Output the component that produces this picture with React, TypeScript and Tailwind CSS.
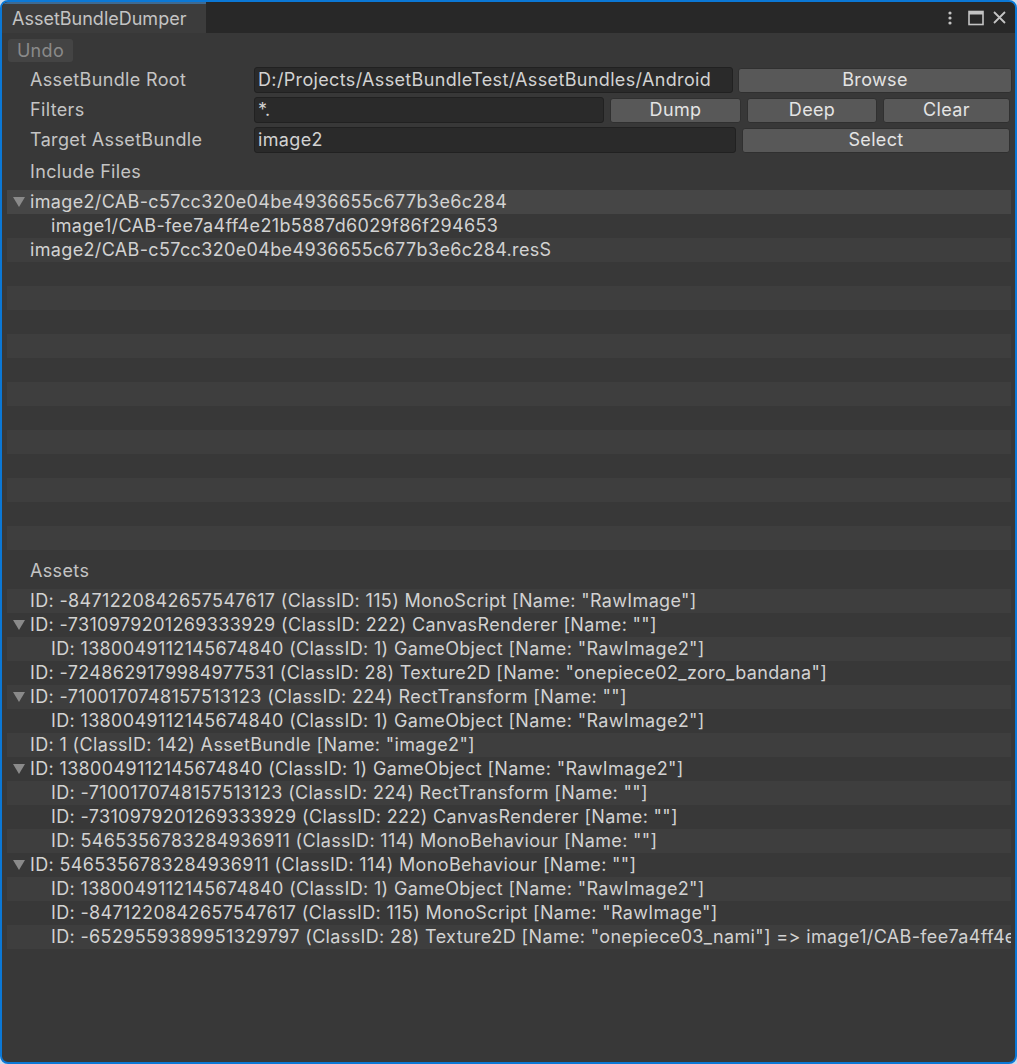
import React from 'react'

type Row = { text: string; depth: number; arrow?: boolean }

const files: Row[] = [
  { text: 'image2/CAB-c57cc320e04be4936655c677b3e6c284', depth: 0, arrow: true },
  { text: 'image1/CAB-fee7a4ff4e21b5887d6029f86f294653', depth: 1 },
  { text: 'image2/CAB-c57cc320e04be4936655c677b3e6c284.resS', depth: 0 }
]

const assets: Row[] = [
  { text: 'ID: -8471220842657547617 (ClassID: 115) MonoScript [Name: "RawImage"]', depth: 0 },
  { text: 'ID: -7310979201269333929 (ClassID: 222) CanvasRenderer [Name: ""]', depth: 0, arrow: true },
  { text: 'ID: 1380049112145674840 (ClassID: 1) GameObject [Name: "RawImage2"]', depth: 1 },
  { text: 'ID: -7248629179984977531 (ClassID: 28) Texture2D [Name: "onepiece02_zoro_bandana"]', depth: 0 },
  { text: 'ID: -7100170748157513123 (ClassID: 224) RectTransform [Name: ""]', depth: 0, arrow: true },
  { text: 'ID: 1380049112145674840 (ClassID: 1) GameObject [Name: "RawImage2"]', depth: 1 },
  { text: 'ID: 1 (ClassID: 142) AssetBundle [Name: "image2"]', depth: 0 },
  { text: 'ID: 1380049112145674840 (ClassID: 1) GameObject [Name: "RawImage2"]', depth: 0, arrow: true },
  { text: 'ID: -7100170748157513123 (ClassID: 224) RectTransform [Name: ""]', depth: 1 },
  { text: 'ID: -7310979201269333929 (ClassID: 222) CanvasRenderer [Name: ""]', depth: 1 },
  { text: 'ID: 5465356783284936911 (ClassID: 114) MonoBehaviour [Name: ""]', depth: 1 },
  { text: 'ID: 5465356783284936911 (ClassID: 114) MonoBehaviour [Name: ""]', depth: 0, arrow: true },
  { text: 'ID: 1380049112145674840 (ClassID: 1) GameObject [Name: "RawImage2"]', depth: 1 },
  { text: 'ID: -8471220842657547617 (ClassID: 115) MonoScript [Name: "RawImage"]', depth: 1 },
  {
    text: 'ID: -6529559389951329797 (ClassID: 28) Texture2D [Name: "onepiece03_nami"] => image1/CAB-fee7a4ff4e21b5887d6029f86f294653',
    depth: 1
  }
]

function TreeRow({ row, index, highlight }: { row?: Row; index: number; highlight?: boolean }): React.JSX.Element {
  const bg = highlight ? 'bg-[#464646]' : index % 2 === 0 ? 'bg-[#3e3e3e]' : 'bg-[#383838]'
  return (
    <div className={`flex h-6 items-center overflow-hidden whitespace-nowrap ${bg}`}>
      {row && (
        <>
          <div className="flex w-[23px] shrink-0 justify-center">
            {row.arrow && (
              <svg width="12" height="10" viewBox="0 0 12 10">
                <path d="M0 0 H12 L6 10 Z" fill="#8a8a8a" />
              </svg>
            )}
          </div>
          <span className={row.depth === 1 ? 'pl-[21px]' : ''}>{row.text}</span>
        </>
      )}
    </div>
  )
}

function Button({ label, className }: { label: string; className: string }): React.JSX.Element {
  return (
    <button
      className={`flex h-[25px] items-center justify-center rounded-[3px] border border-[#303030] bg-[#585858] text-[#e4e4e4] ${className}`}
    >
      {label}
    </button>
  )
}

function Field({ value, className }: { value: string; className: string }): React.JSX.Element {
  return (
    <div
      className={`flex h-[26px] items-center overflow-hidden whitespace-nowrap rounded-[3px] border border-[#212121] bg-[#2a2a2a] px-[3px] text-[#d2d2d2] ${className}`}
    >
      {value}
    </div>
  )
}

export default function App(): React.JSX.Element {
  const fileRows = Array.from({ length: 15 }, (_, i) => files[i])
  return (
    <div
      className="h-[1064px] w-[1017px] bg-[#cfdceb] leading-[22px] [font-feature-settings:'calt'_0,'liga'_0]"
      style={{ fontFamily: 'Inter, "Noto Sans", sans-serif' }}
    >
      <div className="flex h-full w-full flex-col overflow-hidden rounded-[8px] border-2 border-[#0b78d6] bg-[#383838] text-[18px] tracking-[0.35px] text-[#d2d2d2]">
        <div className="flex h-[31px] shrink-0 items-stretch bg-[#282828]">
          <div className="flex w-[204px] items-center border-t-2 border-[#3e6a92] bg-[#3c3c3c] pl-[10px] text-[18px] tracking-normal text-[#c4c4c4]">
            AssetBundleDumper
          </div>
          <div className="flex-1" />
          <div className="flex items-center pr-[8px] text-[#c4c4c4]">
            <svg width="6" height="16" viewBox="0 0 6 16">
              <circle cx="3" cy="3" r="1.6" fill="#c4c4c4" />
              <circle cx="3" cy="8" r="1.6" fill="#c4c4c4" />
              <circle cx="3" cy="13" r="1.6" fill="#c4c4c4" />
            </svg>
            <svg className="ml-[15px]" width="16" height="16" viewBox="0 0 16 16">
              <rect x="1" y="1.5" width="14" height="13" fill="none" stroke="#c4c4c4" strokeWidth="1.6" />
              <rect x="1" y="1.5" width="14" height="3" fill="#c4c4c4" />
            </svg>
            <svg className="ml-[8px]" width="15" height="15" viewBox="0 0 15 15">
              <path d="M2 2 L13 13 M13 2 L2 13" stroke="#c4c4c4" strokeWidth="1.8" />
            </svg>
          </div>
        </div>

        <div className="flex flex-1 flex-col px-[5px]">
          <div className="mt-[6px] pl-[1px]">
            <div className="flex h-[23px] w-[65px] items-center justify-center rounded-[3px] bg-[#444444] text-[#8a8a8a]">
              Undo
            </div>
          </div>

          <div className="mt-[5px] flex flex-col gap-[4px] text-[#c4c4c4]">
            <div className="flex items-center">
              <div className="w-[247px] shrink-0 pl-[23px]">AssetBundle Root</div>
              <Field value="D:/Projects/AssetBundleTest/AssetBundles/Android" className="w-[479px]" />
              <Button label="Browse" className="ml-[5px] mr-[-2px] flex-1" />
            </div>
            <div className="flex items-center">
              <div className="w-[247px] shrink-0 pl-[23px]">Filters</div>
              <Field value="*." className="w-[350px]" />
              <Button label="Dump" className="ml-[6px] w-[131px]" />
              <Button label="Deep" className="ml-[6px] w-[130px]" />
              <Button label="Clear" className="ml-[6px] flex-1" />
            </div>
            <div className="flex items-center">
              <div className="w-[247px] shrink-0 pl-[23px]">Target AssetBundle</div>
              <Field value="image2" className="w-[482px]" />
              <Button label="Select" className="ml-[6px] flex-1" />
            </div>
          </div>

          <div className="flex h-[37px] items-center pl-[23px] text-[#c4c4c4]">Include Files</div>
          <div className="mr-[-1px] flex flex-col">
            {fileRows.map((r, i) => (
              <TreeRow key={i} row={r} index={i} highlight={i === 0} />
            ))}
          </div>

          <div className="flex h-[39px] items-center pl-[23px] pt-[2px] text-[#c4c4c4]">Assets</div>
          <div className="mr-[-1px] flex flex-col">
            {assets.map((r, i) => (
              <TreeRow key={i} row={r} index={i} />
            ))}
          </div>
        </div>
      </div>
    </div>
  )
}
